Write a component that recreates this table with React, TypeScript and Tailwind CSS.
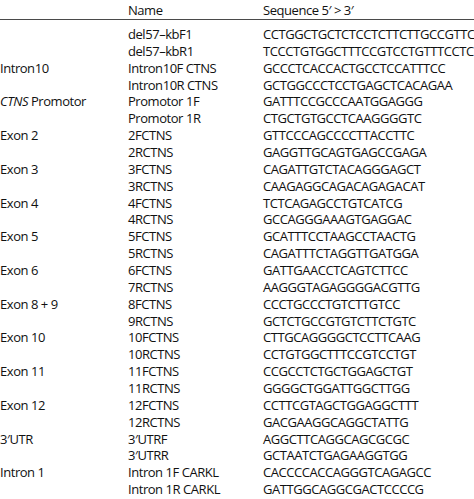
import React from "react";

type Row = { region?: React.ReactNode; name: string; seq: string };

const rows: Row[] = [
  { name: "del57–kbF1", seq: "CCTGGCTGCTCTCCTCTTCTTGCCGTTC" },
  { name: "del57–kbR1", seq: "TCCCTGTGGCTTTCCGTCCTGTTTCCTC" },
  { region: "Intron10", name: "Intron10F CTNS", seq: "GCCCTCACCACTGCCTCCATTTCC" },
  { name: "Intron10R CTNS", seq: "GCTGGCCCTCCTGAGCTCACAGAA" },
  {
    region: (
      <>
        <i>CTNS</i> Promotor
      </>
    ),
    name: "Promotor 1F",
    seq: "GATTTCCGCCCAATGGAGGG",
  },
  { name: "Promotor 1R", seq: "CTGCTGTGCCTCAAGGGGTC" },
  { region: "Exon 2", name: "2FCTNS", seq: "GTTCCCAGCCCCTTACCTTC" },
  { name: "2RCTNS", seq: "GAGGTTGCAGTGAGCCGAGA" },
  { region: "Exon 3", name: "3FCTNS", seq: "CAGATTGTCTACAGGGAGCT" },
  { name: "3RCTNS", seq: "CAAGAGGCAGACAGAGACAT" },
  { region: "Exon 4", name: "4FCTNS", seq: "TCTCAGAGCCTGTCATCG" },
  { name: "4RCTNS", seq: "GCCAGGGAAAGTGAGGAC" },
  { region: "Exon 5", name: "5FCTNS", seq: "GCATTTCCTAAGCCTAACTG" },
  { name: "5RCTNS", seq: "CAGATTTCTAGGTTGATGGA" },
  { region: "Exon 6", name: "6FCTNS", seq: "GATTGAACCTCAGTCTTCC" },
  { name: "7RCTNS", seq: "AAGGGTAGAGGGGACGTTG" },
  { region: "Exon 8 + 9", name: "8FCTNS", seq: "CCCTGCCCTGTCTTGTCC" },
  { name: "9RCTNS", seq: "GCTCTGCCGTGTCTTCTGTC" },
  { region: "Exon 10", name: "10FCTNS", seq: "CTTGCAGGGGCTCCTTCAAG" },
  { name: "10RCTNS", seq: "CCTGTGGCTTTCCGTCCTGT" },
  { region: "Exon 11", name: "11FCTNS", seq: "CCGCCTCTGCTGGAGCTGT" },
  { name: "11RCTNS", seq: "GGGGCTGGATTGGCTTGG" },
  { region: "Exon 12", name: "12FCTNS", seq: "CCTTCGTAGCTGGAGGCTTT" },
  { name: "12RCTNS", seq: "GACGAAGGCAGGCTATTG" },
  { region: "3′UTR", name: "3′UTRF", seq: "AGGCTTCAGGCAGCGCGC" },
  { name: "3′UTRR", seq: "GCTAATCTGAGAAGGTGG" },
  { region: "Intron 1", name: "Intron 1F CARKL", seq: "CACCCCACCAGGGTCAGAGCC" },
  { name: "Intron 1R CARKL", seq: "GATTGGCAGGCGACTCCCCG" },
];

export default function App() {
  return (
    <div
      className="h-[499px] w-[474px] overflow-hidden bg-white text-[13px] font-medium tracking-[-0.45px] text-[#111]"
      style={{ fontFamily: '"Open Sans", "Noto Sans", sans-serif' }}
    >
      {/* header + rule */}
      <div className="grid h-[20px] grid-cols-[128px_135px_1fr] items-center border-b border-[#4a4a4a] leading-[16px]">
        <div />
        <div>Name</div>
        <div className="whitespace-nowrap">Sequence 5′ &gt; 3′</div>
      </div>
      <div className="pt-[6px]">
        {rows.map((r) => (
          <div
            key={r.name}
            className="grid h-[16.87px] grid-cols-[128px_135px_1fr] items-center whitespace-nowrap leading-[16.87px]"
          >
            <div>{r.region}</div>
            <div>{r.name}</div>
            <div>{r.seq}</div>
          </div>
        ))}
      </div>
    </div>
  );
}
